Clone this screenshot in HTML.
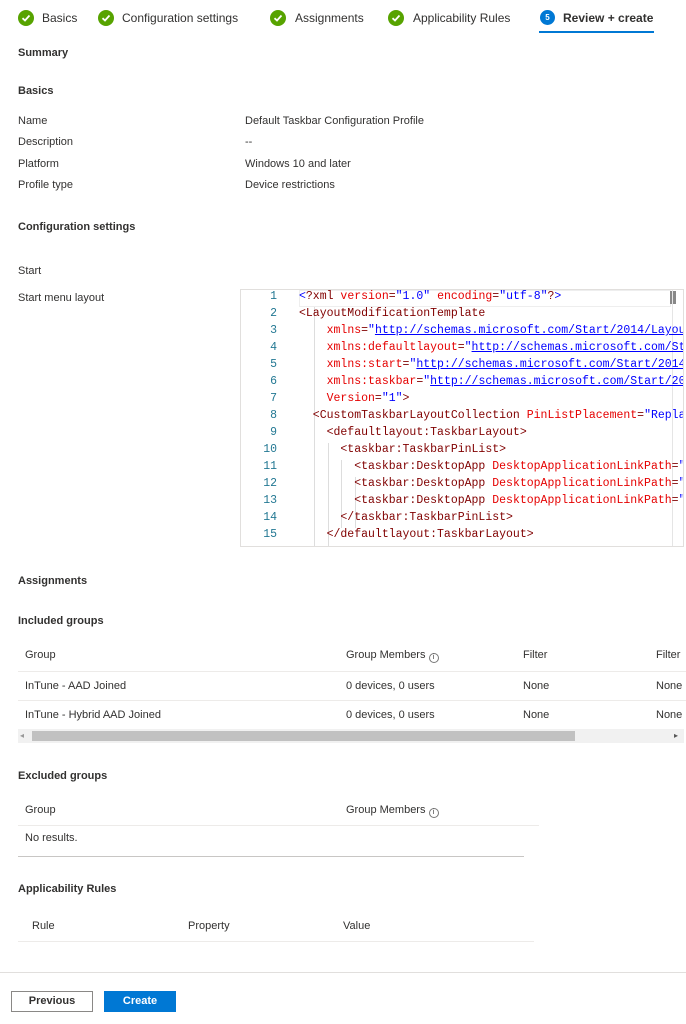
<!DOCTYPE html>
<html><head><meta charset="utf-8"><style>
*{margin:0;padding:0;box-sizing:border-box}
body{width:686px;height:1024px;background:#fff;font-family:"Liberation Sans",sans-serif;font-size:11px;color:#323130;position:relative;overflow:hidden}
.a{position:absolute;line-height:16px;white-space:nowrap}
.b{font-weight:bold}
.chk{position:absolute;width:16px;height:16px;border-radius:50%;background:#57a300;top:10px}
.chk svg{position:absolute;left:3px;top:3px}
.code{position:absolute;left:240px;top:289px;width:444px;height:258px;border:1px solid #e1dfdd;overflow:hidden;font-family:"Liberation Mono",monospace;font-size:11.5px}
.ln{position:absolute;left:0;width:36px;text-align:right;color:#237893}
.cl{position:absolute;left:58px;white-space:pre;color:#800000}
.t{color:#800000}.at{color:#e50000}.v{color:#0000ff}.u{color:#0000ff;text-decoration:underline}
.hl{position:absolute;height:1px;background:#edebe9}
</style></head><body>
<div class="chk" style="left:18px"><svg width="10" height="10"><path d="M1.5 5.2 L4 7.5 L8.5 2.5" stroke="#fff" stroke-width="1.8" fill="none"/></svg></div>
<div class="a" style="left:42px;top:10px;font-size:12px">Basics</div>
<div class="chk" style="left:98px"><svg width="10" height="10"><path d="M1.5 5.2 L4 7.5 L8.5 2.5" stroke="#fff" stroke-width="1.8" fill="none"/></svg></div>
<div class="a" style="left:122px;top:10px;font-size:12px">Configuration settings</div>
<div class="chk" style="left:270px"><svg width="10" height="10"><path d="M1.5 5.2 L4 7.5 L8.5 2.5" stroke="#fff" stroke-width="1.8" fill="none"/></svg></div>
<div class="a" style="left:295px;top:10px;font-size:12px">Assignments</div>
<div class="chk" style="left:388px"><svg width="10" height="10"><path d="M1.5 5.2 L4 7.5 L8.5 2.5" stroke="#fff" stroke-width="1.8" fill="none"/></svg></div>
<div class="a" style="left:413px;top:10px;font-size:12px">Applicability Rules</div>
<div style="position:absolute;left:540px;top:10px;width:15px;height:15px;border-radius:50%;background:#0078d4;color:#fff;font-size:8px;font-weight:bold;text-align:center;line-height:15px">5</div>
<div class="a b" style="left:563px;top:10px;font-size:12px">Review + create</div>
<div style="position:absolute;left:539px;top:31px;width:115px;height:2px;background:#0078d4"></div>

<div class="a b" style="left:18px;top:45px">Summary</div>
<div class="a b" style="left:18px;top:83px">Basics</div>
<div class="a" style="left:18px;top:113px">Name</div><div class="a" style="left:245px;top:113px">Default Taskbar Configuration Profile</div>
<div class="a" style="left:18px;top:134px">Description</div><div class="a" style="left:245px;top:134px">--</div>
<div class="a" style="left:18px;top:156px">Platform</div><div class="a" style="left:245px;top:156px">Windows 10 and later</div>
<div class="a" style="left:18px;top:177px">Profile type</div><div class="a" style="left:245px;top:177px">Device restrictions</div>
<div class="a b" style="left:18px;top:219px">Configuration settings</div>
<div class="a" style="left:18px;top:263px">Start</div>
<div class="a" style="left:18px;top:290px">Start menu layout</div>

<div class="code">
<div style="position:absolute;left:58px;top:0;width:372px;height:17px;border:1px solid #eee"></div>
<div style="position:absolute;left:429px;top:1px;width:6px;height:13px;background:#888"></div>
<div style="position:absolute;left:431px;top:0;width:1px;height:258px;background:#e5e5e5"></div>
<div style="position:absolute;left:73px;top:17px;width:1px;height:240px;background:#ddd"></div>
<div style="position:absolute;left:87px;top:153px;width:1px;height:104px;background:#ddd"></div>
<div style="position:absolute;left:100px;top:170px;width:1px;height:68px;background:#ddd"></div>
<div style="position:absolute;left:114px;top:187px;width:1px;height:51px;background:#ddd"></div>
<div class="ln" style="top:0">1</div><div class="ln" style="top:17px">2</div><div class="ln" style="top:34px">3</div><div class="ln" style="top:51px">4</div><div class="ln" style="top:68px">5</div><div class="ln" style="top:85px">6</div><div class="ln" style="top:102px">7</div><div class="ln" style="top:119px">8</div><div class="ln" style="top:136px">9</div><div class="ln" style="top:153px">10</div><div class="ln" style="top:170px">11</div><div class="ln" style="top:187px">12</div><div class="ln" style="top:204px">13</div><div class="ln" style="top:221px">14</div><div class="ln" style="top:238px">15</div>
<div class="cl" style="top:0"><span class="v">&lt;</span>?xml <span class="at">version</span>=<span class="v">"1.0"</span> <span class="at">encoding</span>=<span class="v">"utf-8"</span>?<span class="v">&gt;</span></div>
<div class="cl" style="top:17px">&lt;LayoutModificationTemplate</div>
<div class="cl" style="top:34px">    <span class="at">xmlns</span>=<span class="v">"</span><span class="u">http://schemas.microsoft.com/Start/2014/LayoutModification</span></div>
<div class="cl" style="top:51px">    <span class="at">xmlns:defaultlayout</span>=<span class="v">"</span><span class="u">http://schemas.microsoft.com/Start/2014</span></div>
<div class="cl" style="top:68px">    <span class="at">xmlns:start</span>=<span class="v">"</span><span class="u">http://schemas.microsoft.com/Start/2014/Start</span></div>
<div class="cl" style="top:85px">    <span class="at">xmlns:taskbar</span>=<span class="v">"</span><span class="u">http://schemas.microsoft.com/Start/2014/Task</span></div>
<div class="cl" style="top:102px">    <span class="at">Version</span>=<span class="v">"1"</span>&gt;</div>
<div class="cl" style="top:119px">  &lt;CustomTaskbarLayoutCollection <span class="at">PinListPlacement</span>=<span class="v">"Replace"</span></div>
<div class="cl" style="top:136px">    &lt;defaultlayout:TaskbarLayout&gt;</div>
<div class="cl" style="top:153px">      &lt;taskbar:TaskbarPinList&gt;</div>
<div class="cl" style="top:170px">        &lt;taskbar:DesktopApp <span class="at">DesktopApplicationLinkPath</span>=<span class="v">"%</span></div>
<div class="cl" style="top:187px">        &lt;taskbar:DesktopApp <span class="at">DesktopApplicationLinkPath</span>=<span class="v">"%</span></div>
<div class="cl" style="top:204px">        &lt;taskbar:DesktopApp <span class="at">DesktopApplicationLinkPath</span>=<span class="v">"%</span></div>
<div class="cl" style="top:221px">      &lt;/taskbar:TaskbarPinList&gt;</div>
<div class="cl" style="top:238px">    &lt;/defaultlayout:TaskbarLayout&gt;</div>
</div>

<div class="a b" style="left:18px;top:573px">Assignments</div>
<div class="a b" style="left:18px;top:613px">Included groups</div>
<div class="a" style="left:25px;top:647px">Group</div>
<div class="a" style="left:346px;top:647px">Group Members <span style="display:inline-block;width:10px;height:10px;border:1px solid #777;border-radius:50%;font-size:7px;line-height:8px;text-align:center;vertical-align:-1px">i</span></div>
<div class="a" style="left:523px;top:647px">Filter</div>
<div class="a" style="left:656px;top:647px">Filter</div>
<div class="hl" style="left:18px;top:671px;width:668px"></div>
<div class="a" style="left:25px;top:678px">InTune - AAD Joined</div>
<div class="a" style="left:346px;top:678px">0 devices, 0 users</div>
<div class="a" style="left:523px;top:678px">None</div>
<div class="a" style="left:656px;top:678px">None</div>
<div class="hl" style="left:18px;top:700px;width:668px"></div>
<div class="a" style="left:25px;top:707px">InTune - Hybrid AAD Joined</div>
<div class="a" style="left:346px;top:707px">0 devices, 0 users</div>
<div class="a" style="left:523px;top:707px">None</div>
<div class="a" style="left:656px;top:707px">None</div>
<div style="position:absolute;left:18px;top:729px;width:666px;height:14px;background:#f1f1f1"></div>
<div style="position:absolute;left:32px;top:731px;width:543px;height:10px;background:#c1c1c1"></div>
<div class="a" style="left:20px;top:728px;font-size:8px;color:#999">◂</div>
<div class="a" style="left:674px;top:728px;font-size:8px;color:#555">▸</div>

<div class="a b" style="left:18px;top:768px">Excluded groups</div>
<div class="a" style="left:25px;top:802px">Group</div>
<div class="a" style="left:346px;top:802px">Group Members <span style="display:inline-block;width:10px;height:10px;border:1px solid #777;border-radius:50%;font-size:7px;line-height:8px;text-align:center;vertical-align:-1px">i</span></div>
<div class="hl" style="left:18px;top:825px;width:521px"></div>
<div class="a" style="left:25px;top:830px">No results.</div>
<div class="hl" style="left:18px;top:856px;width:506px;background:#c8c6c4"></div>

<div class="a b" style="left:18px;top:881px">Applicability Rules</div>
<div class="a" style="left:32px;top:918px">Rule</div>
<div class="a" style="left:188px;top:918px">Property</div>
<div class="a" style="left:343px;top:918px">Value</div>
<div class="hl" style="left:18px;top:941px;width:516px"></div>

<div class="hl" style="left:0;top:972px;width:686px;background:#e1dfdd"></div>
<div style="position:absolute;left:11px;top:991px;width:82px;height:21px;border:1px solid #8a8886;text-align:center;line-height:19px;font-weight:bold">Previous</div>
<div style="position:absolute;left:104px;top:991px;width:72px;height:21px;background:#0078d4;color:#fff;text-align:center;line-height:21px;font-weight:bold">Create</div>
</body></html>
